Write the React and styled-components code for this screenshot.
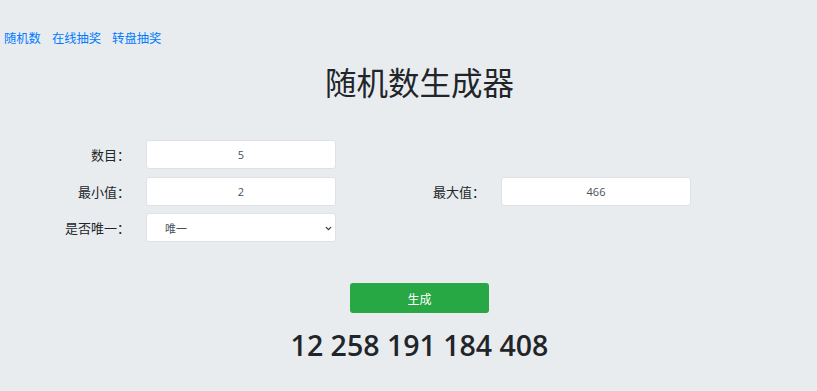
import React from "react";
import styled, { createGlobalStyle } from "styled-components";
import { ChevronDown } from "lucide-react";

const GlobalStyle = createGlobalStyle`
  html, body {
    margin: 0;
    padding: 0;
    background-color: #e9ecef;
  }
  body {
    font-family: "Open Sans", "Noto Sans CJK SC", sans-serif;
    color: #212529;
  }
`;

const Page = styled.div`
  width: 817px;
  height: 391px;
  background-color: #e9ecef;
  padding-top: 29px;
  box-sizing: border-box;
`;

const Nav = styled.nav`
  display: flex;
  gap: 11px;
  padding-left: 4px;
  height: 18px;
  align-items: center;
`;

const NavLink = styled.a`
  font-size: 12.3px;
  color: #007bff;
  text-decoration: none;
  font-family: "Noto Sans CJK SC", sans-serif;
`;

const Centered = styled.div`
  display: flex;
  justify-content: center;
  padding-left: 22px;
`;

const Title = styled.h1`
  margin: 12px 0 0;
  font-size: 31.5px;
  font-weight: 400;
  line-height: 44px;
  color: #212529;
  font-family: "Noto Sans CJK SC", sans-serif;
`;

const Form = styled.div`
  display: grid;
  grid-template-columns: 130px 190px 133px 190px;
  column-gap: 16px;
  row-gap: 7.5px;
  margin-top: 37px;
  align-items: center;
`;

const Label = styled.label`
  text-align: right;
  font-size: 13px;
  color: #212529;
  font-family: "Noto Sans CJK SC", sans-serif;
`;

const Input = styled.input`
  height: 29px;
  box-sizing: border-box;
  border: 1px solid #dee2e6;
  border-radius: 3px;
  background: #fff;
  text-align: center;
  font-size: 11px;
  color: #495057;
  font-family: "Open Sans", sans-serif;
  outline: none;
`;

const SelectWrap = styled.div`
  position: relative;
  height: 29px;
`;

const Select = styled.select`
  appearance: none;
  width: 100%;
  height: 29px;
  box-sizing: border-box;
  border: 1px solid #dee2e6;
  border-radius: 3px;
  background: #fff;
  font-size: 11px;
  color: #495057;
  padding: 0 18px;
  font-family: "Noto Sans CJK SC", sans-serif;
  outline: none;
`;

const Arrow = styled(ChevronDown)`
  position: absolute;
  right: 3px;
  top: 11px;
  width: 9px;
  height: 9px;
  color: #343a40;
  pointer-events: none;
`;

const Actions = styled(Centered)`
  margin-top: 41px;
`;

const Button = styled.button`
  width: 139px;
  height: 30px;
  border: none;
  border-radius: 3px;
  background-color: #28a745;
  color: #fff;
  font-size: 12px;
  font-family: "Noto Sans CJK SC", sans-serif;
`;

const Result = styled(Centered)`
  font-size: 28.5px;
  font-weight: 600;
  line-height: 40px;
  margin-top: 12px;
  color: #212529;
`;

const App = () => {
  return (
    <Page>
      <GlobalStyle />
      <Nav>
        <NavLink href="#">随机数</NavLink>
        <NavLink href="#">在线抽奖</NavLink>
        <NavLink href="#">转盘抽奖</NavLink>
      </Nav>
      <Centered>
        <Title>随机数生成器</Title>
      </Centered>
      <Form>
        <Label>数目：</Label>
        <Input defaultValue="5" />
        <span />
        <span />
        <Label>最小值：</Label>
        <Input defaultValue="2" />
        <Label>最大值：</Label>
        <Input defaultValue="466" />
        <Label>是否唯一：</Label>
        <SelectWrap>
          <Select defaultValue="唯一">
            <option>唯一</option>
            <option>不唯一</option>
          </Select>
          <Arrow strokeWidth={3.5} />
        </SelectWrap>
      </Form>
      <Actions>
        <Button>生成</Button>
      </Actions>
      <Result>12 258 191 184 408</Result>
    </Page>
  );
};

export default App;
